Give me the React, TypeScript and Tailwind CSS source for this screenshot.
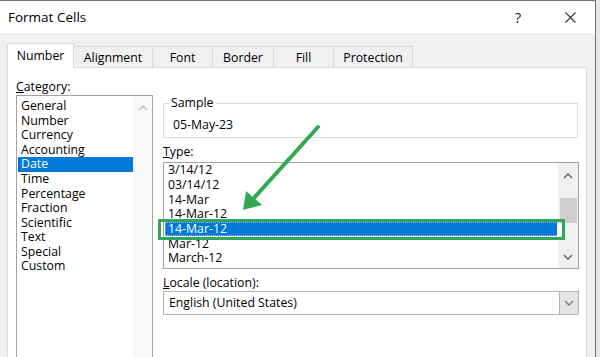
const categories = [
  "General",
  "Number",
  "Currency",
  "Accounting",
  "Date",
  "Time",
  "Percentage",
  "Fraction",
  "Scientific",
  "Text",
  "Special",
  "Custom",
];

const types = ["3/14/12", "03/14/12", "14-Mar", "14-Mar-12", "14-Mar-12", "Mar-12", "March-12"];

const tabs = ["Number", "Alignment", "Font", "Border", "Fill", "Protection"];
const tabWidths = ["w-[67px]", "w-[79px]", "w-[60px]", "w-[61px]", "w-[60px]", "w-[79px]"];

function Chevron({ up, color = "#5f5f5f" }: { up?: boolean; color?: string }) {
  return (
    <svg width="10" height="6" viewBox="0 0 10 6" aria-hidden="true">
      <polyline
        points={up ? "1,5 5,1 9,5" : "1,1 5,5 9,1"}
        fill="none"
        stroke={color}
        strokeWidth="1.4"
      />
    </svg>
  );
}

export default function App() {
  return (
    <div className="relative flex h-[357px] w-[600px] overflow-hidden bg-[#e6e6e6] font-['Open_Sans',sans-serif] text-[12.3px] text-black">
      <div className="flex h-[430px] w-[596px] shrink-0 flex-col border-t border-r border-[#6e6e6e] bg-[#f0f0f0]">
        {/* Title bar */}
        <div className="flex h-[32px] items-center bg-white pl-[8px]">
          <span className="text-[13.5px]">Format Cells</span>
          <div className="ml-auto flex h-full items-center gap-[6px] pr-[2px]">
            <div className="flex h-full w-[46px] items-center justify-center text-[15px] text-[#222]">?</div>
            <div className="flex h-full w-[46px] items-center justify-center">
              <svg width="11" height="11" viewBox="0 0 11 11" aria-hidden="true">
                <path d="M0.5 0.5 L10.5 10.5 M10.5 0.5 L0.5 10.5" stroke="#333" strokeWidth="1.1" />
              </svg>
            </div>
          </div>
        </div>

        {/* Tabs */}
        <div className="flex h-[34px] items-end pl-[7px]">
          {tabs.map((t, i) =>
            i === 0 ? (
              <div
                key={t}
                className={`relative z-10 -mb-px flex h-[25px] ${tabWidths[i]} items-center justify-center border border-b-0 border-[#d9d9d9] bg-white pb-px leading-[16px]`}
              >
                {t}
              </div>
            ) : (
              <div
                key={t}
                className={`flex h-[21px] ${tabWidths[i]} items-center justify-center border border-l-0 border-b-0 border-[#d9d9d9] bg-[#f0f0f0] pt-px leading-[16px]`}
              >
                {t}
              </div>
            )
          )}
        </div>

        {/* Panel */}
        <div className="ml-[7px] flex w-[580px] flex-1 border border-[#d9d9d9] bg-white">
          {/* Category column */}
          <div className="flex flex-col pl-[8px] pt-[11px]">
            <div className="leading-[16px]">
              <span className="underline">C</span>ategory:
            </div>
            <div className="flex h-[280px] w-[137px] border border-[#a3a3a3]">
              <div className="flex-1 pt-[3px] pl-px">
                {categories.map((c) => (
                  <div
                    key={c}
                    className={`flex h-[14.55px] items-center pl-[3px] leading-[14px] ${
                      c === "Date" ? "bg-[#0078d7] text-white" : ""
                    }`}
                  >
                    {c}
                  </div>
                ))}
              </div>
              <div className="flex w-[19px] justify-center bg-[#f7f7f7] pt-[9px]">
                <div className="h-[6px]">
                  <Chevron up color="#c2c2c2" />
                </div>
              </div>
            </div>
          </div>

          {/* Right column */}
          <div className="ml-[10px] flex w-[416px] flex-col pt-[28px]">
            <fieldset className="w-[415px] border border-[#dcdcdc]">
              <legend className="ml-[5px] px-[2px] leading-[14px]">Sample</legend>
              <div className="pt-[7px] pb-[4px] pl-[9px] leading-[16px]">05-May-23</div>
            </fieldset>

            <div className="mt-[6px] leading-[16px]">
              <span className="underline">T</span>ype:
            </div>
            <div className="mt-[2px] flex h-[107px] w-[416px] border border-[#a3a3a3]">
              <div className="flex-1 pl-px">
                {types.map((t, i) => (
                  <div
                    key={i}
                    className={`flex h-[14.67px] items-center pl-[3px] leading-[14px] ${
                      i === 4 ? "bg-[#0078d7] text-white outline-1 outline-dotted outline-[#9bbbe0] -outline-offset-1" : ""
                    }`}
                  >
                    {t}
                  </div>
                ))}
              </div>
              <div className="flex w-[20px] flex-col items-center bg-[#f0f0f0]">
                <div className="mt-[10px] h-[6px]">
                  <Chevron up />
                </div>
                <div className="mt-[19px] h-[25px] w-[17px] bg-[#cdcdcd]" />
                <div className="mt-auto mb-[8px] h-[6px]">
                  <Chevron />
                </div>
              </div>
            </div>

            <div className="mt-[6px] leading-[16px]">
              <span className="underline">L</span>ocale (location):
            </div>
            <div className="flex h-[24px] w-[416px] items-center border border-[#b4b4b4]">
              <span className="flex-1 pl-[5px] leading-[16px]">English (United States)</span>
              <div className="flex h-full w-[19px] items-center justify-center border-l border-[#b4b4b4] bg-[#e5e5e5]">
                <Chevron color="#7a7a7a" />
              </div>
            </div>
          </div>
        </div>
      </div>

      {/* Green highlight box */}
      <div className="absolute top-[219px] left-[158px] flex h-[21px] w-[407px] items-center justify-end border-[3px] border-[#2fa85a]">
        <div className="h-[13px] w-[5px] bg-white" />
      </div>

      {/* Green arrow */}
      <svg className="pointer-events-none absolute top-0 left-0" width="600" height="357" aria-hidden="true">
        <line x1="318" y1="127" x2="254" y2="198" stroke="#33a853" strokeWidth="4" strokeLinecap="round" />
        <polygon points="243,210 246,191 262,205" fill="#33a853" />
      </svg>
    </div>
  );
}
